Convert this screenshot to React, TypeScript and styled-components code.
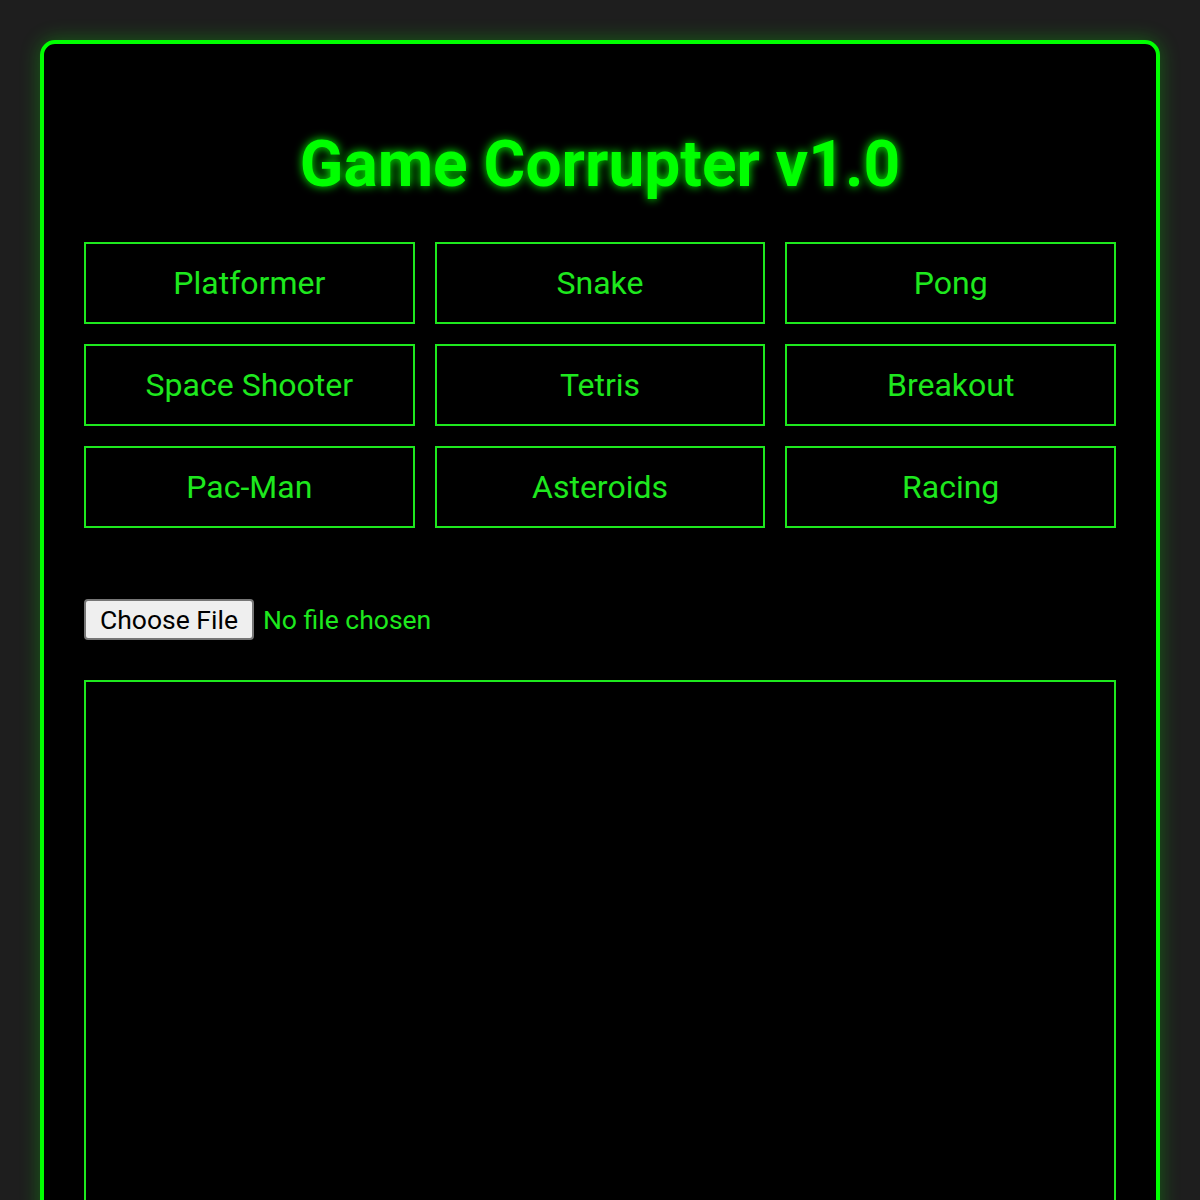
import React from 'react';
import styled, { createGlobalStyle } from 'styled-components';

const GlobalStyle = createGlobalStyle`
    body {
        margin: 0;
        padding: 40px;
        background: #1e1e1e;
        font-family: Roboto, "Liberation Sans", sans-serif;
        overflow: hidden;
    }
`;

const Container = styled.div`
    background: #000;
    border: 4px solid #0f0;
    border-radius: 15px;
    padding: 40px;
    box-shadow: 0 0 20px rgba(0, 255, 0, 0.3);
`;

const Title = styled.h1`
    margin: 43px 0 40px;
    text-align: center;
    font-size: 64px;
    font-weight: 700;
    line-height: 75px;
    color: #0f0;
    text-shadow: 0 0 10px #0f0;
`;

const GameGrid = styled.div`
    display: grid;
    grid-template-columns: repeat(3, 1fr);
    gap: 20px;
`;

const GameButton = styled.button`
    height: 82px;
    background: #000;
    border: 2px solid #1ee81e;
    color: #1ee81e;
    font-family: Roboto, "Liberation Sans", sans-serif;
    font-size: 32px;
    cursor: pointer;
`;

const FileRow = styled.div`
    margin-top: 70px;
    height: 42px;
    display: flex;
    align-items: center;
`;

const FileInput = styled.input`
    font-family: Roboto, "Liberation Sans", sans-serif;
    font-size: 26.5px;
    color: #1ee81e;

    &::file-selector-button {
        font-family: Roboto, "Liberation Sans", sans-serif;
        font-size: 26.5px;
        color: #000;
        background: #efefef;
        border: 2px solid #767676;
        border-radius: 4px;
        padding: 3px 14px;
        margin-right: 9px;
    }
`;

const Screen = styled.canvas`
    display: block;
    margin-top: 40px;
    width: 100%;
    height: 600px;
    box-sizing: border-box;
    border: 2px solid #1ee81e;
    background: #000;
`;

const games = [
    'Platformer',
    'Snake',
    'Pong',
    'Space Shooter',
    'Tetris',
    'Breakout',
    'Pac-Man',
    'Asteroids',
    'Racing',
];

const App = () => (
    <>
        <GlobalStyle />
        <Container>
            <Title>Game Corrupter v1.0</Title>
            <GameGrid>
                {games.map(game => (
                    <GameButton key={game}>{game}</GameButton>
                ))}
            </GameGrid>
            <FileRow>
                <FileInput type="file" />
            </FileRow>
            <Screen />
        </Container>
    </>
);

export default App;
